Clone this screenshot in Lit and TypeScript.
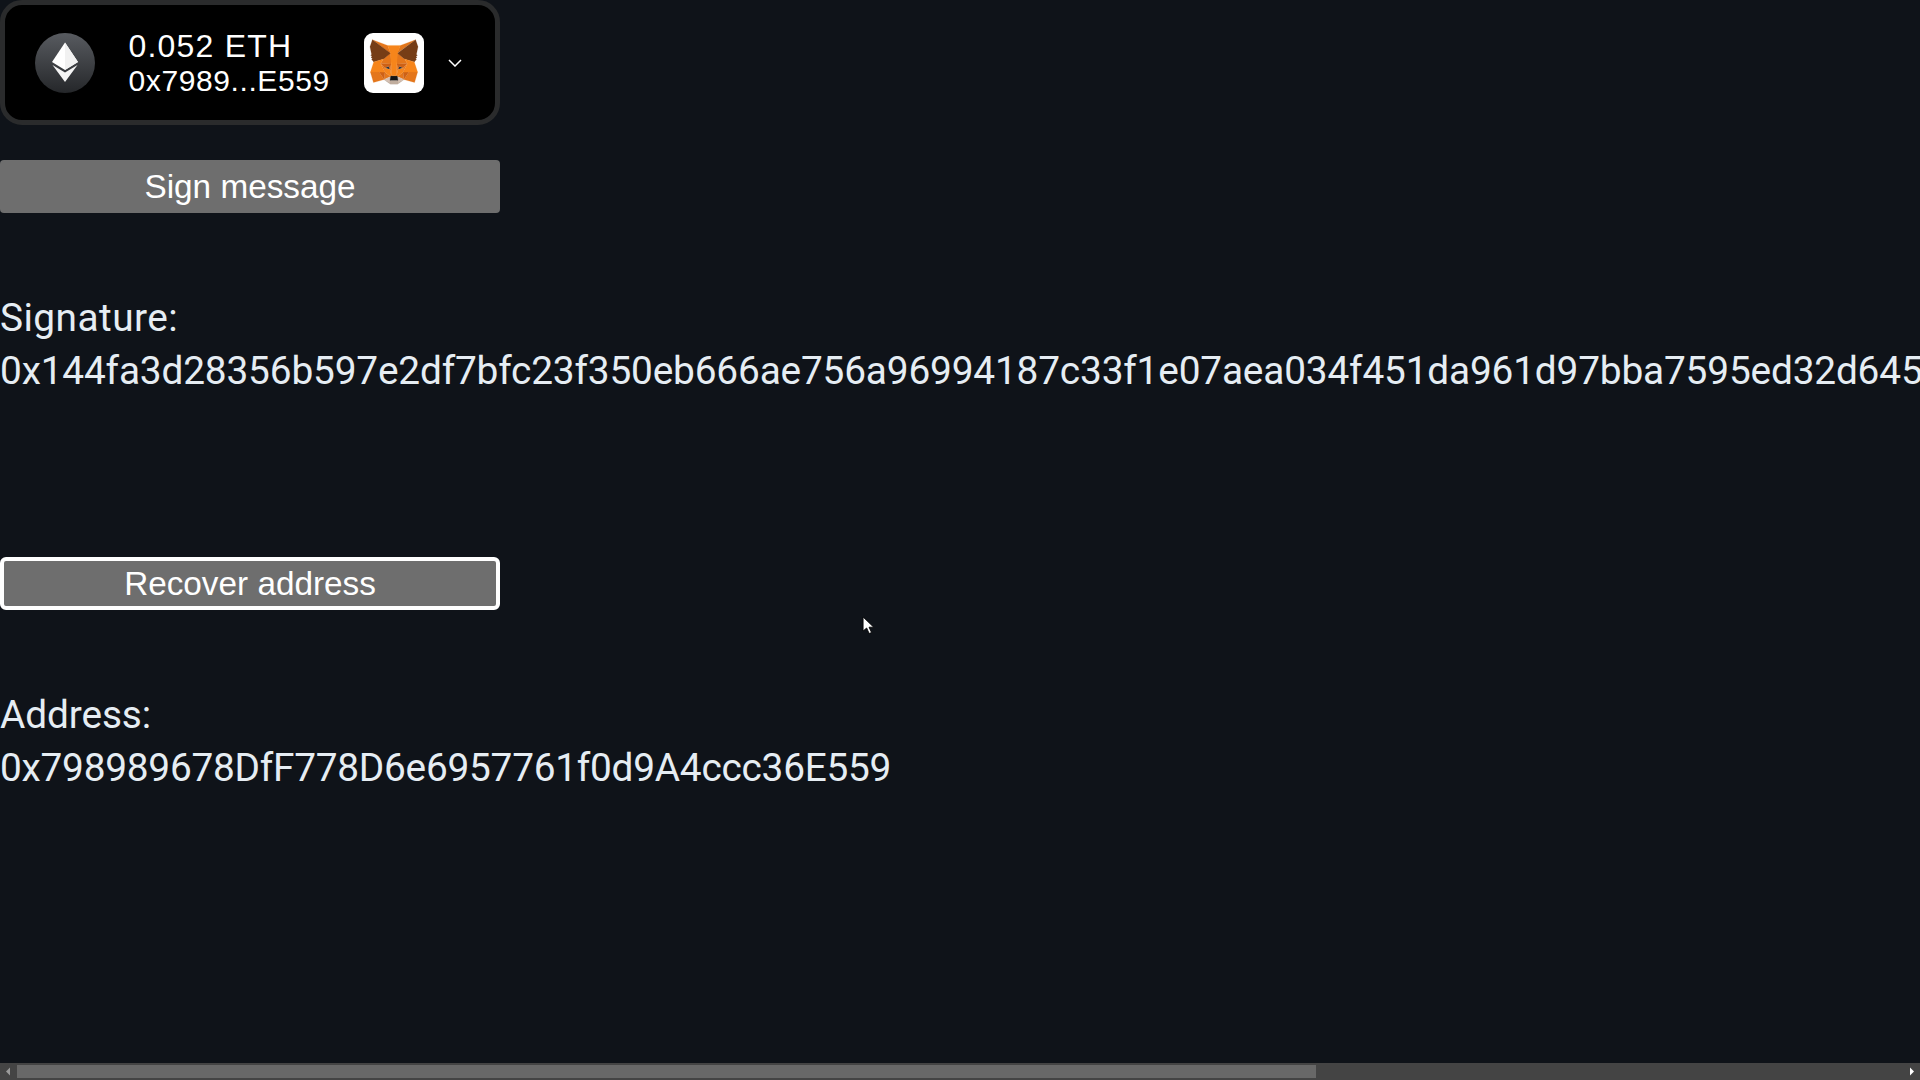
import { LitElement, html, css, svg } from "lit";
import { customElement } from "lit/decorators.js";

const FOX: [string, string][] = [
  ["#E2761B", "274.1,35.5 174.6,109.4 193,65.8"],
  ["#E4761B", "44.4,35.5 143.1,110.1 125.6,65.8"],
  ["#E4761B", "238.3,206.8 211.8,247.4 268.5,263 284.8,207.7"],
  ["#E4761B", "33.9,207.7 50.1,263 106.8,247.4 80.3,206.8"],
  ["#E4761B", "103.6,138.2 87.8,162.1 144.1,164.6 142.1,104.1"],
  ["#E4761B", "214.9,138.2 175.9,103.4 174.6,164.6 230.8,162.1"],
  ["#E4761B", "106.8,247.4 140.6,230.9 111.4,208.1"],
  ["#E4761B", "177.9,230.9 211.8,247.4 207.1,208.1"],
  ["#D7C1B3", "211.8,247.4 177.9,230.9 180.6,253 180.3,262.3"],
  ["#D7C1B3", "106.8,247.4 138.3,262.3 138.1,253 140.6,230.9"],
  ["#233447", "138.8,193.5 110.6,185.2 130.5,176.1"],
  ["#233447", "179.7,193.5 188,176.1 208,185.2"],
  ["#CD6116", "106.8,247.4 111.6,206.8 80.3,207.7"],
  ["#CD6116", "207,206.8 211.8,247.4 238.3,207.7"],
  ["#CD6116", "230.8,162.1 174.6,164.6 179.8,193.5 188.1,176.1 208.1,185.2"],
  ["#CD6116", "110.6,185.2 130.6,176.1 138.8,193.5 144.1,164.6 87.8,162.1"],
  ["#E4751F", "87.8,162.1 111.4,208.1 110.6,185.2"],
  ["#E4751F", "208.1,185.2 207.1,208.1 230.8,162.1"],
  ["#E4751F", "144.1,164.6 138.8,193.5 145.4,227.6 146.9,182.7"],
  ["#E4751F", "174.6,164.6 171.9,182.6 173.1,227.6 179.8,193.5"],
  ["#F6851B", "179.8,193.5 173.1,227.6 177.9,230.9 207.1,208.1 208.1,185.2"],
  ["#F6851B", "110.6,185.2 111.4,208.1 140.6,230.9 145.4,227.6 138.8,193.5"],
  ["#C0AD9E", "180.3,262.3 180.6,253 178.1,250.8 140.4,250.8 138.1,253 138.3,262.3 106.8,247.4 117.8,256.4 140.1,271.9 178.4,271.9 200.8,256.4 211.8,247.4"],
  ["#161616", "177.9,230.9 173.1,227.6 145.4,227.6 140.6,230.9 138.1,253 140.4,250.8 178.1,250.8 180.6,253"],
  ["#763D16", "278.3,114.2 286.8,73.4 274.1,35.5 177.9,106.9 214.9,138.2 267.2,153.5 278.8,140 273.8,136.4 281.8,129.1 275.6,124.3 283.6,118.2"],
  ["#763D16", "31.8,73.4 40.3,114.2 35.2,118 43.2,124.1 37.1,129.1 45.1,136.4 40.1,139.9 51.6,153.5 103.9,138.2 140.9,106.9 44.4,35.5"],
  ["#F6851B", "267.2,153.5 214.9,138.2 230.8,162.1 207.1,208.1 238.3,207.7 284.8,207.7"],
  ["#F6851B", "103.6,138.2 51.6,153.5 34.2,207.7 80.3,207.7 111.4,208.1 87.8,162.1"],
  ["#F6851B", "174.6,164.6 177.9,106.9 193.1,65.8 125.6,65.8 140.9,106.9 144.1,164.6 145.3,182.8 145.4,227.6 173.1,227.6 173.3,182.8"],
];

@customElement("app-root")
export class AppRoot extends LitElement {
  static styles = css`
    :host {
      display: flex;
      flex-direction: column;
      position: relative;
      width: 1920px;
      height: 1080px;
      overflow: hidden;
      background: #0f1319;
      color: #e6edf3;
      font-family: Roboto, "Noto Sans", sans-serif;
    }
    .page {
      flex: 1;
      min-height: 0;
      overflow: hidden;
      display: flex;
      flex-direction: column;
      align-items: flex-start;
    }
    .wallet {
      box-sizing: border-box;
      flex: none;
      width: 500px;
      height: 125px;
      border: 5px solid #2a2b2c;
      border-radius: 22px;
      background: #000;
      color: #fff;
      display: flex;
      align-items: center;
      padding-left: 30px;
      font-family: "Liberation Sans", Arial, sans-serif;
    }
    .eth { width: 60px; height: 60px; flex: none; display: block; }
    .info {
      display: flex;
      flex-direction: column;
      margin-left: 33.5px;
      width: 235.5px;
      flex: none;
    }
    .bal { font-size: 32px; line-height: 36px; letter-spacing: 1.2px; }
    .addr { font-size: 30px; line-height: 34px; letter-spacing: 0.6px; }
    .fox {
      width: 60px;
      height: 60px;
      flex: none;
      background: #fff;
      border-radius: 9px;
      display: block;
    }
    .chev { width: 14px; height: 8px; margin-left: 23.5px; flex: none; display: block; }
    .btn {
      box-sizing: border-box;
      flex: none;
      width: 500px;
      height: 53px;
      border: none;
      border-radius: 4px;
      background: #6e6e6e;
      color: #fff;
      font-family: "Liberation Sans", Arial, sans-serif;
      font-size: 33.3px;
      padding: 0;
      display: flex;
      align-items: center;
      justify-content: center;
    }
    .sign { margin-top: 35px; }
    .recover {
      margin-top: 160px;
      border: 4px solid #fff;
      border-radius: 6px;
    }
    .line {
      font-size: 38.8px;
      line-height: 52.5px;
      white-space: nowrap;
      font-weight: 400;
    }
    .hex { letter-spacing: -0.25px; }
    .long { letter-spacing: -0.17px; }
    .label { margin-top: 79px; }
    .sig { letter-spacing: 0.45px; }
    .adr { letter-spacing: -0.1px; }
    .bar {
      flex: none;
      height: 17px;
      background: #444;
      display: flex;
      align-items: center;
      box-sizing: border-box;
    }
    .arrow { width: 17px; height: 17px; flex: none; display: block; }
    .track { flex: 1; height: 13px; display: flex; }
    .thumb { width: 1299px; background: #686868; }
    .cursor {
      position: absolute;
      left: 862px;
      top: 616px;
      width: 13px;
      height: 19px;
      display: block;
    }
  `;

  render() {
    return html`
      <div class="page">
        <div class="wallet">
          <svg class="eth" viewBox="0 0 60 60">
            <defs>
              <linearGradient id="g" x1="0" y1="0" x2="0" y2="1">
                <stop offset="0" stop-color="#585b60"></stop>
                <stop offset="1" stop-color="#25272a"></stop>
              </linearGradient>
            </defs>
            <circle cx="30" cy="30" r="30" fill="url(#g)"></circle>
            <path d="M30 9.5 43 29 30 37 17 29Z" fill="#fff"></path>
            <path d="M30 9.5 43 29 30 37Z" fill="#f1f1f1"></path>
            <path d="M17.5 32 30 39.5 42.5 32 30 49Z" fill="#f4f4f4"></path>
          </svg>
          <div class="info">
            <div class="bal">0.052 ETH</div>
            <div class="addr">0x7989...E559</div>
          </div>
          <svg class="fox" viewBox="0 0 318.6 318.6">
            ${FOX.map(([c, p]) => svg`<polygon fill=${c} stroke=${c} stroke-width="1" points=${p}></polygon>`)}
          </svg>
          <svg class="chev" viewBox="0 0 14 8">
            <path d="M1 1 7 7 13 1" fill="none" stroke="#fff" stroke-width="1.5"></path>
          </svg>
        </div>
        <div class="btn sign">Sign message</div>
        <div class="line label sig">Signature:</div>
        <div class="line long">0x144fa3d28356b597e2df7bfc23f350eb666ae756a96994187c33f1e07aea034f451da961d97bba7595ed32d645</div>
        <div class="btn recover">Recover address</div>
        <div class="line label adr">Address:</div>
        <div class="line hex">0x798989678DfF778D6e6957761f0d9A4ccc36E559</div>
      </div>
      <div class="bar">
        <svg class="arrow" viewBox="0 0 17 17"><path d="M6 8.5 10 4.5V12.5Z" fill="#9a9a9a"></path></svg>
        <div class="track"><div class="thumb"></div></div>
        <svg class="arrow" viewBox="0 0 17 17"><path d="M11 8.5 7 4.5V12.5Z" fill="#fff"></path></svg>
      </div>
      <svg class="cursor" viewBox="0 0 12 19" preserveAspectRatio="none">
        <path d="M1 1V15L4.3 12 6.6 17.5 8.8 16.5 6.5 11.2H10.8Z" fill="#fff" stroke="#000" stroke-width="0.8"></path>
      </svg>
    `;
  }
}
